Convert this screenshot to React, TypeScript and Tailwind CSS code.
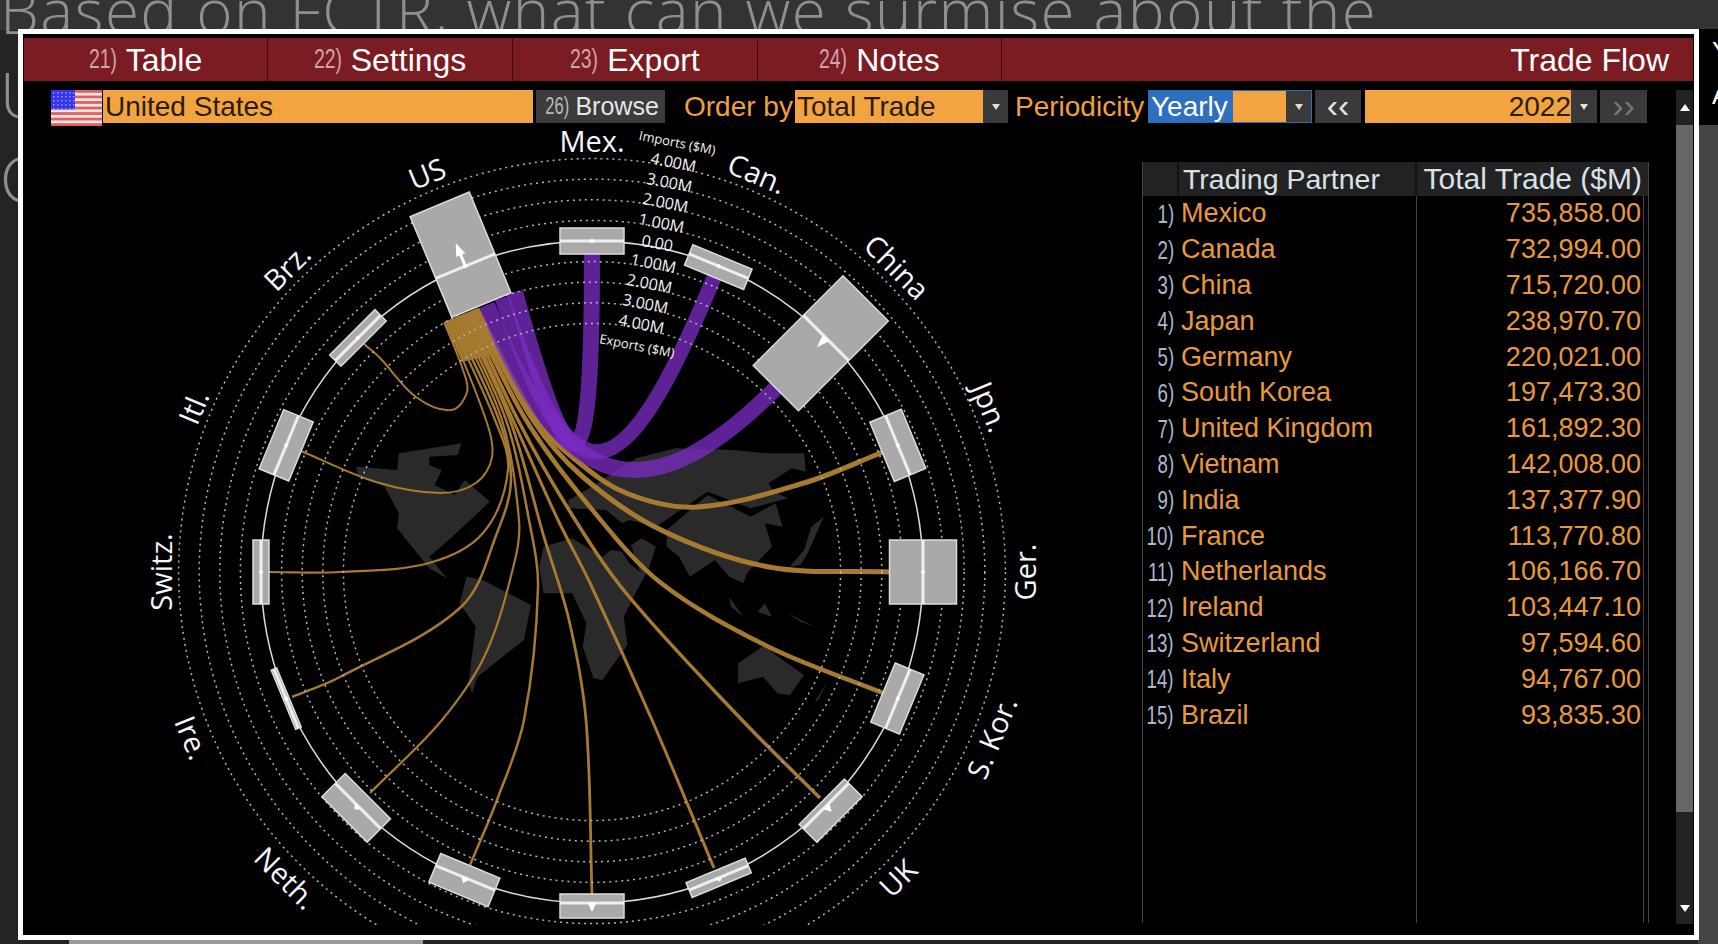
const CX = 592;
const CY = 572;
const R = 331;

type Pt = [number, number];
type Bar = { name: string; angle: number; out: number; inn: number; arrow: number };

// clockwise from the top; arrow > 0 points to the centre, < 0 away from it
const bars: Bar[] = [
  { name: "Mex.", angle: 0, out: 13, inn: 13, arrow: 0 },
  { name: "Can.", angle: 22.5, out: 10, inn: 12, arrow: 0 },
  { name: "China", angle: 45, out: 56, inn: 71, arrow: 13 },
  { name: "Jpn.", angle: 67.5, out: 17, inn: 17, arrow: 0 },
  { name: "Ger.", angle: 90, out: 33.5, inn: 33.5, arrow: 0 },
  { name: "S. Kor.", angle: 112.5, out: 15, inn: 16, arrow: 0 },
  { name: "UK", angle: 135, out: 19, inn: 6, arrow: -8 },
  { name: "", angle: 157.5, out: 8, inn: 8, arrow: -4 },
  { name: "", angle: 180, out: 15, inn: 9, arrow: -9 },
  { name: "", angle: 202.5, out: 18, inn: 13, arrow: -6 },
  { name: "Neth.", angle: 225, out: 19, inn: 14, arrow: -5 },
  { name: "Ire.", angle: 247.5, out: 3, inn: 3, arrow: 0 },
  { name: "Switz.", angle: 270, out: 8, inn: 8, arrow: 0 },
  { name: "Itl.", angle: 292.5, out: 16, inn: 16, arrow: 0 },
  { name: "Brz.", angle: 315, out: 8, inn: 8, arrow: 0 },
  { name: "US", angle: 337.5, out: 67, inn: 42, arrow: 0 },
];

const goldFlows: { width: number; pts: Pt[] }[] = [
  { width: 2, pts: [[444, 322], [463, 370], [467, 392], [451, 410], [416, 397], [380, 358], [364, 344]] },
  { width: 2, pts: [[447, 321], [486, 420], [492, 457], [476, 483], [440, 493], [376, 482], [301, 451]] },
  { width: 2.2, pts: [[450, 320], [495, 420], [508, 470], [483, 533], [429, 563], [340, 572], [269, 572]] },
  { width: 2.5, pts: [[453, 319], [499, 420], [511, 480], [497, 533], [461, 607], [340, 677], [292, 697]] },
  { width: 2.2, pts: [[456, 317], [502, 420], [519, 520], [515, 560], [486, 653], [442, 720], [370, 793]] },
  { width: 2.5, pts: [[459, 316], [506, 420], [529, 520], [538, 587], [524, 720], [497, 800], [470, 865]] },
  { width: 2.8, pts: [[462, 315], [510, 420], [544, 537], [569, 620], [586, 720], [592, 894]] },
  { width: 3, pts: [[465, 314], [513, 420], [558, 520], [590, 583], [652, 720], [714, 868]] },
  { width: 3.5, pts: [[468, 313], [518, 420], [569, 510], [626, 593], [742, 720], [820, 798]] },
  { width: 4.5, pts: [[471, 312], [526, 420], [590, 507], [661, 583], [769, 647], [883, 693]] },
  { width: 5, pts: [[474, 310], [533, 420], [583, 477], [661, 530], [769, 567], [889, 572]] },
  { width: 5, pts: [[477, 309], [536, 420], [572, 457], [626, 493], [697, 507], [804, 483], [883, 452]] },
];

const partners = [
  ["Mexico", "735,858.00"],
  ["Canada", "732,994.00"],
  ["China", "715,720.00"],
  ["Japan", "238,970.70"],
  ["Germany", "220,021.00"],
  ["South Korea", "197,473.30"],
  ["United Kingdom", "161,892.30"],
  ["Vietnam", "142,008.00"],
  ["India", "137,377.90"],
  ["France", "113,770.80"],
  ["Netherlands", "106,166.70"],
  ["Ireland", "103,447.10"],
  ["Switzerland", "97,594.60"],
  ["Italy", "94,767.00"],
  ["Brazil", "93,835.30"],
];

const rad = (deg: number) => (deg * Math.PI) / 180;
const polar = (deg: number, r: number): Pt => [CX + r * Math.sin(rad(deg)), CY - r * Math.cos(rad(deg))];

// smooth curve through the points read off the chart, handles scale with segment length
function spline(pts: Pt[]) {
  const tangent = (i: number): Pt => {
    const a = pts[Math.max(i - 1, 0)];
    const b = pts[Math.min(i + 1, pts.length - 1)];
    const l = Math.hypot(b[0] - a[0], b[1] - a[1]);
    return [(b[0] - a[0]) / l, (b[1] - a[1]) / l];
  };
  let d = `M${pts[0][0]} ${pts[0][1]}`;
  for (let i = 0; i < pts.length - 1; i++) {
    const p = pts[i];
    const q = pts[i + 1];
    const len = Math.hypot(q[0] - p[0], q[1] - p[1]) / 3;
    const t1 = tangent(i);
    const t2 = tangent(i + 1);
    d += `C${p[0] + t1[0] * len} ${p[1] + t1[1] * len} ${q[0] - t2[0] * len} ${q[1] - t2[1] * len} ${q[0]} ${q[1]}`;
  }
  return d;
}

function purplePath(s: Pt, bar: Bar, a: number, b: number) {
  const rr = R - bar.inn;
  const e = polar(bar.angle, rr);
  const sl = Math.hypot(CX - s[0], CY - s[1]);
  const c1 = [s[0] + (a * (CX - s[0])) / sl, s[1] + (a * (CY - s[1])) / sl];
  const c2 = [e[0] + (b * (CX - e[0])) / rr, e[1] + (b * (CY - e[1])) / rr];
  return `M${s[0]} ${s[1]}C${c1[0]} ${c1[1]} ${c2[0]} ${c2[1]} ${e[0]} ${e[1]}`;
}

function BarMark({ angle, out, inn, arrow }: Bar) {
  const [x, y] = polar(angle, R);
  return (
    <g transform={`translate(${x} ${y}) rotate(${angle})`}>
      <rect x={-32} y={-out} width={64} height={out + inn} fill="#a9a9a9" stroke="#dcdcdc" strokeWidth={1.5} />
      <line x1={-32} x2={32} y1={0} y2={0} stroke="#eeeeee" strokeWidth={3} />
      {arrow === 0 ? (
        <circle r={2} fill="#ffffff" />
      ) : (
        <polygon points={`-4.5,0 4.5,0 0,${arrow}`} fill="#ffffff" />
      )}
    </g>
  );
}

function Chart() {
  const axis = ["4.00M", "3.00M", "2.00M", "1.00M", "0.00", "1.00M", "2.00M", "3.00M", "4.00M"];
  const us = polar(337.5, R);

  return (
    <svg width={1118} height={800} viewBox="24 125 1118 800" className="block shrink-0">
      <g fill="#2a2a2a" transform="translate(340 420) scale(0.357 0.3333)">
        <polygon points="45,140 160,150 165,100 340,70 330,105 250,110 250,135 285,150 265,195 320,225 350,180 420,245 310,355 250,410 300,475 250,445 160,325 165,280 125,200 50,165" />
        <polygon points="355,470 400,480 535,555 515,660 385,770 370,820 360,790 380,620 335,550" />
        <polygon points="570,380 650,355 735,410 760,390 790,395 810,430 840,455 865,445 830,515 795,590 805,675 735,780 710,775 680,680 690,610 650,520 570,520 558,440" />
        <polygon points="640,240 690,210 830,115 940,85 1100,90 1200,100 1300,100 1305,155 1265,145 1200,190 1215,215 1255,235 1150,265 1030,215 885,320 810,300 790,310 745,270 640,265" />
        <polygon points="915,330 1030,225 1150,290 1220,250 1240,320 1190,310 1210,380 1140,460 1130,490 1090,470 1050,420 980,470 950,410 915,380" />
        <polygon points="815,375 845,355 885,380 865,445 840,455" />
        <polygon points="1320,320 1355,290 1310,400 1290,435 1260,440 1300,390" />
        <polygon points="1090,530 1130,590 1095,560" />
        <polygon points="1170,575 1190,550 1210,590 1180,580" />
        <polygon points="1255,580 1330,620 1290,605" />
        <polygon points="1115,730 1190,675 1220,705 1300,765 1260,825 1225,820 1185,770 1115,790" />
        <polygon points="1330,845 1365,785 1340,840" />
      </g>

      <polygon points="444,322 478,308 498,353 462,362" fill="#a0742c" />
      {goldFlows.map((f, i) => (
        <path key={i} d={spline(f.pts)} fill="none" stroke="#a67a30" strokeWidth={f.width} />
      ))}
      <g fill="none" stroke="#7a2cc0" strokeOpacity={0.78}>
        <path d={purplePath([515, 292], bars[0], 230, 230)} strokeWidth={16} />
        <path d={purplePath([502, 298], bars[1], 233, 233)} strokeWidth={15} />
        <path d={purplePath([487, 305], bars[2], 208, 181)} strokeWidth={16} />
      </g>

      <g fill="none" stroke="#b4b4b4" strokeWidth={1.5} strokeDasharray="2 4">
        {[-4, -3, -2, -1, 1, 2, 3, 4].map((k) => (
          <circle key={k} cx={CX} cy={CY} r={R + k * 20.6} />
        ))}
      </g>
      <circle cx={CX} cy={CY} r={R} fill="none" stroke="#dddddd" strokeWidth={1.5} />

      {bars.map((b) => (
        <BarMark key={b.angle} {...b} />
      ))}
      <g transform={`translate(${us[0]} ${us[1]}) rotate(337.5)`}>
        <line x1={0} x2={0} y1={0} y2={-16} stroke="#ffffff" strokeWidth={3} />
        <polygon points="-5,-12 5,-12 0,-25" fill="#ffffff" />
      </g>
      <g transform={`translate(${polar(45, R)[0]} ${polar(45, R)[1]}) rotate(45)`}>
        <line x1={0} x2={0} y1={0} y2={8} stroke="#ffffff" strokeWidth={3} />
      </g>

      <g className="font-['Open_Sans',sans-serif] text-[29px]" fill="#f4f8fb" textAnchor="middle" dominantBaseline="central">
        {bars.map((b) => {
          if (!b.name) return null;
          const [x, y] = polar(b.angle, 432);
          const rot = b.angle >= 90 && b.angle < 270 ? b.angle - 180 : b.angle;
          return (
            <text key={b.name} x={x} y={y} transform={`rotate(${rot} ${x} ${y})`}>
              {b.name}
            </text>
          );
        })}
      </g>

      <g className="font-['Open_Sans',sans-serif]" fill="#f4f4f4" textAnchor="middle" dominantBaseline="central">
        {axis.map((t, i) => {
          const [x, y] = polar(11.25, 418 - i * 20.6);
          return (
            <text key={i} x={x} y={y} fontSize={16} transform={`rotate(11.25 ${x} ${y})`}>
              {t}
            </text>
          );
        })}
        {[
          ["Imports ($M)", 438],
          ["Exports ($M)", 231],
        ].map(([t, r]) => {
          const [x, y] = polar(11.25, r as number);
          return (
            <text key={t} x={x} y={y} fontSize={13} transform={`rotate(11.25 ${x} ${y})`}>
              {t}
            </text>
          );
        })}
      </g>
    </svg>
  );
}

function Flag() {
  return (
    <svg width={51} height={36} viewBox="0 0 51 36" className="block shrink-0">
      <rect width={51} height={36} fill="#f4e6e6" />
      {[0, 2, 4, 6, 8, 10, 12].map((i) => (
        <rect key={i} y={(i * 36) / 13} width={51} height={36 / 13} fill="#e0605f" />
      ))}
      <rect width={24} height={19.4} fill="#3535ee" />
      <g fill="#9a9af5">
        {[2, 6, 10, 14, 18].map((y) =>
          [2, 6, 10, 14, 18, 22].map((x) => <rect key={`${x}-${y}`} x={x} y={y} width={1.5} height={1.5} />),
        )}
      </g>
    </svg>
  );
}

function Tab({ num, label, className }: { num: string; label: string; className: string }) {
  return (
    <div className={`flex items-center justify-center border-r border-[#3c0d10] ${className}`}>
      <span className="-ml-[11px] mr-[9px] inline-block origin-right scale-x-[0.72] text-[27px] text-[#cfa3ab]">{num}</span>
      <span>{label}</span>
    </div>
  );
}

function DropArrow({ className }: { className: string }) {
  return (
    <div className={`flex h-full items-center justify-center bg-[#3a3a3a] ${className}`}>
      <div className="h-0 w-0 border-x-[4px] border-t-[6px] border-x-transparent border-t-[#e0e0e0]" />
    </div>
  );
}

function Table() {
  return (
    <div className="mt-[37px] flex h-[761px] w-[507px] shrink-0 flex-col border-x border-[#444444] text-[27px] leading-none">
      <div className="flex h-[34px] shrink-0 bg-[#222222] text-[#d8e0e8]">
        <div className="w-[36px] border-r-2 border-[#111111]" />
        <div className="flex w-[238px] items-center whitespace-nowrap border-r-2 border-[#111111] pl-[4px] text-[28.5px]">Trading Partner</div>
        <div className="flex w-[226px] items-center justify-end whitespace-nowrap pr-[1px] text-[30px]">Total Trade ($M)</div>
      </div>
      {partners.map(([name, value], i) => (
        <div key={name} className="flex h-[35.8px] shrink-0">
          <div className="flex w-[31px] items-center justify-end">
            <span className="inline-block origin-right scale-x-[0.72] text-[26px] text-[#a9b9d2]">{i + 1})</span>
          </div>
          <div className="flex w-[243px] items-center border-r border-[#444444] pl-[7px] text-[#e9983c]">{name}</div>
          <div className="flex w-[227px] items-center justify-end border-r border-[#444444] pr-[2px] text-[#e9983c]">{value}</div>
        </div>
      ))}
      <div className="flex min-h-0 flex-1">
        <div className="w-[31px]" />
        <div className="w-[243px] border-r border-[#444444]" />
        <div className="w-[227px] border-r border-[#444444]" />
      </div>
    </div>
  );
}

export default function App() {
  return (
    <div className="relative h-[944px] w-[1718px] overflow-hidden bg-[#242424] font-['Liberation_Sans',sans-serif]">
      <div className="h-[30px] bg-[#333333]" />
      <div className="absolute left-0 top-[-32px] whitespace-pre font-['Open_Sans',sans-serif] text-[62px] font-light leading-[84px] tracking-[0.023em] text-[#8f8f8f]">
        {"Based on FCTR, what can we surmise about the\nU\nC"}
      </div>
      <div className="absolute right-0 top-[29px] h-[96px] w-[20px] bg-black pl-[14px] text-[26px] leading-[44px] text-white">
        <div>Y</div>
        <div>A</div>
      </div>
      <div className="absolute right-0 top-[125px] h-[819px] w-[20px] bg-[#444444]" />
      <div className="absolute bottom-0 left-[69px] h-[4px] w-[354px] bg-[#999999]" />

      <div className="absolute left-[18px] top-[29px] flex h-[911px] w-[1681px] flex-col border-[5px] border-white bg-black">
        <div className="mx-[1px] mt-[4px] flex h-[43px] shrink-0 bg-[#7a1c22] text-[32px] text-white">
          <Tab num="21)" label="Table" className="w-[244px]" />
          <Tab num="22)" label="Settings" className="w-[245px]" />
          <Tab num="23)" label="Export" className="w-[245px]" />
          <Tab num="24)" label="Notes" className="w-[244px]" />
          <div className="flex flex-1 items-center justify-end pr-[24px]">Trade Flow</div>
        </div>

        <div className="mt-[9px] flex min-h-0 flex-1 pb-[11px] pl-[1px] pr-[1px]">
          <div className="flex w-[1652px] flex-col">
            <div className="flex h-[33px] shrink-0 items-center pl-[27px] text-[28px] leading-none text-[#f0a040]">
              <div className="h-[36px] self-start">
                <Flag />
              </div>
              <div className="ml-[1px] flex h-full w-[430px] items-center bg-[#f2a441] pl-[2px] text-[#2b1c05]">United States</div>
              <div className="ml-[3px] flex h-full w-[129px] items-center justify-center whitespace-nowrap bg-[#3c3c3c] text-[25px] text-[#e6e6e6]">
                <span className="-ml-[6px] mr-[6px] inline-block origin-right scale-x-[0.72] text-[23px] text-[#b9b9b9]">26)</span>
                Browse
              </div>
              <div className="ml-[19px] w-[109px] whitespace-nowrap">Order by</div>
              <div className="ml-[2px] flex h-full w-[188px] items-center whitespace-nowrap bg-[#f2a441] pl-[2px] text-[#2b1c05]">Total Trade</div>
              <DropArrow className="w-[25px]" />
              <div className="ml-[7px] w-[133px] whitespace-nowrap">Periodicity</div>
              <div className="flex h-full w-[164px] border border-[#2a6db5]">
                <div className="flex w-[84px] items-center bg-[#2f6fc0] pl-[2px] text-white">Yearly</div>
                <div className="w-[53px] bg-[#f2a441]" />
                <DropArrow className="flex-1" />
              </div>
              <div className="ml-[3px] flex h-full w-[46px] items-center justify-center bg-[#3a3a3a] pb-[4px] text-[34px] text-[#e6e6e6]">‹‹</div>
              <div className="ml-[4px] flex h-full w-[206px] items-center justify-end bg-[#f2a441] text-[#2b1c05]">2022</div>
              <DropArrow className="w-[26px]" />
              <div className="ml-[3px] flex h-full w-[47px] items-center justify-center bg-[#3a3a3a] pb-[4px] text-[34px] text-[#777777]">››</div>
            </div>
            <div className="flex min-h-0 flex-1 items-start pt-[2px]">
              <Chart />
              <Table />
            </div>
          </div>
          <div className="flex w-[17px] shrink-0 flex-col bg-[#222222]">
            <div className="flex h-[35px] items-center justify-center">
              <div className="h-0 w-0 border-x-[5px] border-b-[7px] border-x-transparent border-b-white" />
            </div>
            <div className="h-[687px] bg-[#666666]" />
            <div className="flex flex-1 items-end justify-center pb-[12px]">
              <div className="h-0 w-0 border-x-[5px] border-t-[7px] border-x-transparent border-t-white" />
            </div>
          </div>
        </div>
      </div>
    </div>
  );
}
